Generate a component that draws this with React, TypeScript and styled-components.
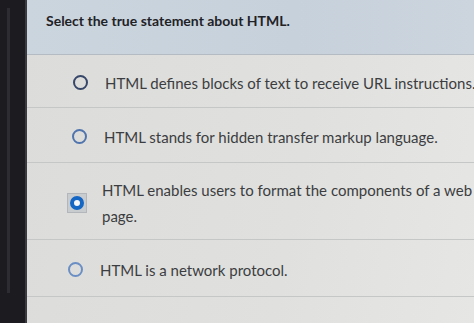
import React from "react";
import styled, { createGlobalStyle } from "styled-components";

const Global = createGlobalStyle`
  html, body { margin: 0; padding: 0; width: 474px; height: 323px; overflow: hidden; background: #dedfdd; }
  #root { width: 474px; height: 323px; }
`;

const Frame = styled.div`
  display: flex;
  width: 474px;
  height: 323px;
  overflow: hidden;
  font-family: Lato, "Open Sans", sans-serif;
`;

const Bezel = styled.div`
  flex: 0 0 25px;
  background: #1c1b20;
  display: flex;
  padding-left: 7px;
  box-sizing: border-box;
`;

const BezelStripe = styled.div`
  width: 3px;
  background: #2d2c32;
  margin: 8px 0 30px;
`;

const Screen = styled.div`
  flex: 1;
  display: flex;
  flex-direction: column;
  min-width: 0;
  background: linear-gradient(100deg, #dcdcda 0%, #e0e1df 60%, #e6e6e4 100%);
  border-left: 2px solid #3a3a40;
`;

const Header = styled.div`
  height: 55px;
  box-sizing: border-box;
  padding: 12px 0 0 19px;
  background: linear-gradient(90deg, #cbd5de 0%, #c7d1db 60%, #ccd5de 100%);
  border-bottom: 1px solid #b4bbc2;
`;

const Title = styled.div`
  font-size: 14px;
  font-weight: 700;
  color: #1f2226;
  white-space: nowrap;
`;

const List = styled.div`
  display: flex;
  flex-direction: column;
`;

const Row = styled.div<{ $h: number; $indent: number }>`
  height: ${(p) => p.$h}px;
  box-sizing: border-box;
  display: flex;
  align-items: center;
  padding: 3px 0 0 ${(p) => p.$indent}px;
  border-bottom: 1px solid #c5c7c6;
`;

const RadioSlot = styled.div`
  flex: 0 0 20px;
  height: 20px;
  display: flex;
  align-items: center;
  justify-content: center;
  margin-right: 15px;
`;

const Radio = styled.div<{ $color: string }>`
  width: 11px;
  height: 11px;
  border-radius: 50%;
  border: 2px solid ${(p) => p.$color};
`;

const FocusBox = styled.div`
  width: 20px;
  height: 20px;
  box-sizing: border-box;
  background: #c9cccf;
  border: 1px solid #b3b7bb;
  display: flex;
  align-items: center;
  justify-content: center;
`;

const Checked = styled.div`
  width: 14px;
  height: 14px;
  box-sizing: border-box;
  border-radius: 50%;
  border: 4.5px solid #1466c4;
  background: #f4f6f8;
`;

const Text = styled.div`
  flex: 0 0 380px;
  font-size: 15px;
  line-height: 26px;
  color: #3c3d40;
`;

const options = [
  { text: "HTML defines blocks of text to receive URL instructions.", h: 53, indent: 43, color: "#37476a" },
  { text: "HTML stands for hidden transfer markup language.", h: 55, indent: 42, color: "#5074ad" },
  { text: "HTML enables users to format the components of a web page.", h: 77, indent: 40, selected: true },
  { text: "HTML is a network protocol.", h: 57, indent: 38, color: "#6b8fc4" },
];

export default function App() {
  return (
    <>
      <Global />
      <Frame>
        <Bezel>
          <BezelStripe />
        </Bezel>
        <Screen>
          <Header>
            <Title>Select the true statement about HTML.</Title>
          </Header>
          <List>
            {options.map((o) => (
              <Row key={o.text} $h={o.h} $indent={o.indent}>
                <RadioSlot>
                  {o.selected ? (
                    <FocusBox>
                      <Checked />
                    </FocusBox>
                  ) : (
                    <Radio $color={o.color!} />
                  )}
                </RadioSlot>
                <Text>{o.text}</Text>
              </Row>
            ))}
          </List>
        </Screen>
      </Frame>
    </>
  );
}
